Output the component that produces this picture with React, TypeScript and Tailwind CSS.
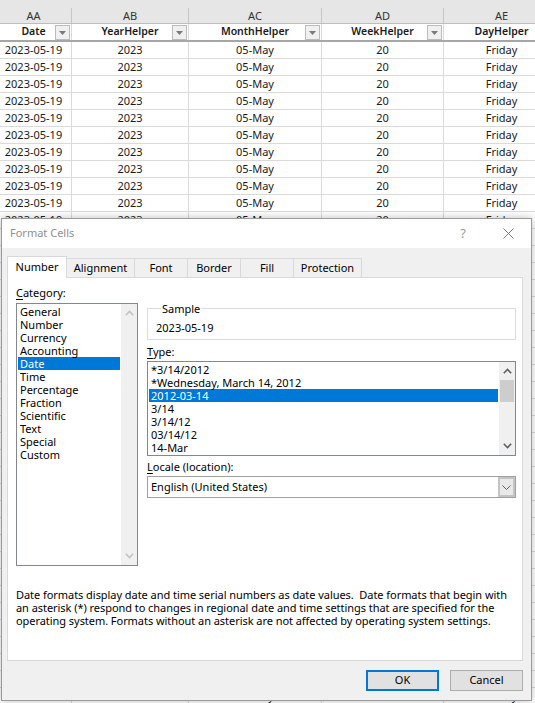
import type { ReactNode } from "react";

interface SheetColumn {
  letter: string;
  name: string;
  value: string;
  width: string;
  filter: boolean;
}

const COLUMNS: SheetColumn[] = [
  { letter: "AA", name: "Date", value: "2023-05-19", width: "w-[76px]", filter: true },
  { letter: "AB", name: "YearHelper", value: "2023", width: "w-[117px]", filter: true },
  { letter: "AC", name: "MonthHelper", value: "05-May", width: "w-[133px]", filter: true },
  { letter: "AD", name: "WeekHelper", value: "20", width: "w-[122px]", filter: true },
  { letter: "AE", name: "DayHelper", value: "Friday", width: "w-[116px]", filter: false }
];

const CATEGORIES = [
  "General",
  "Number",
  "Currency",
  "Accounting",
  "Date",
  "Time",
  "Percentage",
  "Fraction",
  "Scientific",
  "Text",
  "Special",
  "Custom"
];

const DATE_TYPES = [
  "*3/14/2012",
  "*Wednesday, March 14, 2012",
  "2012-03-14",
  "3/14",
  "3/14/12",
  "03/14/12",
  "14-Mar"
];

const TABS = [
  { label: "Number", width: "w-[60px]" },
  { label: "Alignment", width: "w-[69px]" },
  { label: "Font", width: "w-[54px]" },
  { label: "Border", width: "w-[54px]" },
  { label: "Fill", width: "w-[54px]" },
  { label: "Protection", width: "w-[69px]" }
];

const ROW_COUNT = 40;

function FilterButton() {
  return (
    <span className="absolute bottom-0 right-px flex h-[15px] w-[15px] items-center justify-center border border-[#bcbcbc] bg-[#f0f0f0]">
      <svg width="7" height="4" viewBox="0 0 7 4">
        <path d="M0 0h7L3.5 4z" fill="#7a7a7a" />
      </svg>
    </span>
  );
}

function Sheet() {
  return (
    <div className="-ml-[4px] text-[11px] text-[#1a1a1a]">
      <div className="flex h-[24px] border-b border-[#bdbdbd] bg-[#e6e6e6]">
        {COLUMNS.map((col) => (
          <div key={col.letter} className={`${col.width} flex shrink-0 items-end`}>
            <div className="h-[15px] w-full border-r border-[#c6c6c6] text-center leading-[15px] text-[#333]">
              {col.letter}
            </div>
          </div>
        ))}
      </div>
      <div className="flex h-[18px] border-b-2 border-[#a6a6a6]">
        {COLUMNS.map((col) => (
          <div
            key={col.letter}
            className={`${col.width} relative flex shrink-0 items-center justify-center border-r border-[#d9d9d9] text-[10.5px] font-semibold`}
          >
            {col.name}
            {col.filter ? <FilterButton /> : null}
          </div>
        ))}
      </div>
      {Array.from({ length: ROW_COUNT }, (_, i) => (
        <div key={i} className="flex h-[17px] border-b border-[#dadada]">
          {COLUMNS.map((col) => (
            <div
              key={col.letter}
              className={`${col.width} flex shrink-0 items-center justify-center border-r border-[#dadada]`}
            >
              {col.value}
            </div>
          ))}
        </div>
      ))}
    </div>
  );
}

function Chevron({ dir, color }: { dir: "up" | "down"; color: string }) {
  return (
    <svg width="9" height="6" viewBox="0 0 9 6">
      <path
        d={dir === "up" ? "M0.8 5.2L4.5 1.5l3.7 3.7" : "M0.8 0.8l3.7 3.7 3.7-3.7"}
        fill="none"
        stroke={color}
        strokeWidth="1.6"
      />
    </svg>
  );
}

function Underlined({ first, rest }: { first: string; rest: string }) {
  return (
    <p className="h-[15px] leading-[15px]">
      <span className="underline underline-offset-2">{first}</span>
      {rest}
    </p>
  );
}

function ListBox({
  items,
  selected,
  className,
  scrollbar
}: {
  items: string[];
  selected: string;
  className: string;
  scrollbar: ReactNode;
}) {
  return (
    <div className={`flex border border-[#828790] bg-white ${className}`}>
      <div className="flex-1 overflow-hidden px-px pt-[1px]">
        {items.map((item) => (
          <div
            key={item}
            className={`h-[13px] whitespace-nowrap pl-[2px] leading-[13px] ${
              item === selected ? "bg-[#0078d7] text-white" : ""
            }`}
          >
            {item}
          </div>
        ))}
      </div>
      {scrollbar}
    </div>
  );
}

function FormatCellsDialog() {
  return (
    <div className="absolute left-[1px] top-[218px] flex h-[483px] w-[531px] flex-col border border-[#9a9a9a] bg-[#f0f0f0] text-[11px] text-black shadow-[0_0_8px_rgba(0,0,0,0.25)]">
      <div className="flex h-[29px] shrink-0 items-center bg-white pl-[8px] pr-[17px]">
        <span className="flex-1 text-[11px] text-[#8f8f8f]">Format Cells</span>
        <span className="mr-[37px] text-[13px] text-[#9a9a9a]">?</span>
        <svg width="11" height="11" viewBox="0 0 11 11">
          <path d="M0.5 0.5l10 10M10.5 0.5l-10 10" stroke="#7a7a7a" strokeWidth="1" />
        </svg>
      </div>

      <div className="flex flex-1 flex-col pl-[5px] pr-[8px] pt-[8px]">
        <div className="flex h-[21px] items-end">
          {TABS.map((tab, i) =>
            i === 0 ? (
              <div
                key={tab.label}
                className={`${tab.width} relative z-10 -mb-px flex h-[22px] items-center justify-center border border-b-0 border-[#d9d9d9] bg-white pb-[1px]`}
              >
                {tab.label}
              </div>
            ) : (
              <div
                key={tab.label}
                className={`${tab.width} -ml-px flex h-[19px] items-center justify-center border border-b-0 border-[#d9d9d9] bg-[#f0f0f0]`}
              >
                {tab.label}
              </div>
            )
          )}
        </div>

        <div className="flex h-[384px] flex-col border border-[#d9d9d9] bg-white pl-[8px] pt-[7px]">
          <div className="flex gap-[9px]">
            <div className="flex w-[122px] flex-col">
              <Underlined first="C" rest="ategory:" />
              <ListBox
                items={CATEGORIES}
                selected="Date"
                className="mt-[3px] h-[263px]"
                scrollbar={
                  <div className="flex w-[16px] flex-col items-center justify-between bg-[#f0f0f0] py-[6px]">
                    <Chevron dir="up" color="#c2c2c2" />
                    <Chevron dir="down" color="#c2c2c2" />
                  </div>
                }
              />
            </div>

            <div className="mt-[16px] flex w-[369px] flex-col">
              <fieldset className="h-[39px] border border-[#dcdcdc] pl-[8px]">
                <legend className="ml-[5px] px-px leading-[15px]">Sample</legend>
                <p className="pt-[4px] leading-[15px]">2023-05-19</p>
              </fieldset>

              <div className="mt-[4px]">
                <Underlined first="T" rest="ype:" />
              </div>
              <ListBox
                items={DATE_TYPES}
                selected="2012-03-14"
                className="mt-[2px] h-[95px]"
                scrollbar={
                  <div className="flex w-[16px] flex-col bg-[#f0f0f0]">
                    <div className="flex h-[18px] items-center justify-center">
                      <Chevron dir="up" color="#606060" />
                    </div>
                    <div className="mx-px h-[22px] bg-[#cdcdcd]" />
                    <div className="flex-1" />
                    <div className="flex h-[18px] items-center justify-center">
                      <Chevron dir="down" color="#606060" />
                    </div>
                  </div>
                }
              />

              <div className="mt-[3px]">
                <Underlined first="L" rest="ocale (location):" />
              </div>
              <div className="mt-[2px] flex h-[22px] border border-[#a0a0a0] bg-white">
                <span className="flex flex-1 items-center pl-[3px]">English (United States)</span>
                <span className="flex w-[17px] items-center justify-center border-2 border-[#c4c4c4] bg-[#e9e9e9]">
                  <svg width="9" height="5" viewBox="0 0 9 5">
                    <path d="M0.5 0.5l4 4 4-4" fill="none" stroke="#606060" strokeWidth="1" />
                  </svg>
                </span>
              </div>
            </div>
          </div>

          <p className="mt-[22px] whitespace-pre leading-[13px] tracking-[-0.05px]">
            {"Date formats display date and time serial numbers as date values.  Date formats that begin with"}
            <br />
            {"an asterisk (*) respond to changes in regional date and time settings that are specified for the"}
            <br />
            {"operating system. Formats without an asterisk are not affected by operating system settings."}
          </p>
        </div>

        <div className="mt-[9px] flex justify-end gap-[11px]">
          <button
            type="button"
            className="flex h-[21px] w-[73px] items-center justify-center border-2 border-[#0078d7] bg-[#e1e1e1]"
          >
            OK
          </button>
          <button
            type="button"
            className="flex h-[21px] w-[73px] items-center justify-center border border-[#adadad] bg-[#e1e1e1]"
          >
            Cancel
          </button>
        </div>
      </div>
    </div>
  );
}

export default function App() {
  return (
    <div className="relative h-[703px] w-[535px] overflow-hidden bg-white font-['Noto_Sans',sans-serif]">
      <Sheet />
      <FormatCellsDialog />
    </div>
  );
}
